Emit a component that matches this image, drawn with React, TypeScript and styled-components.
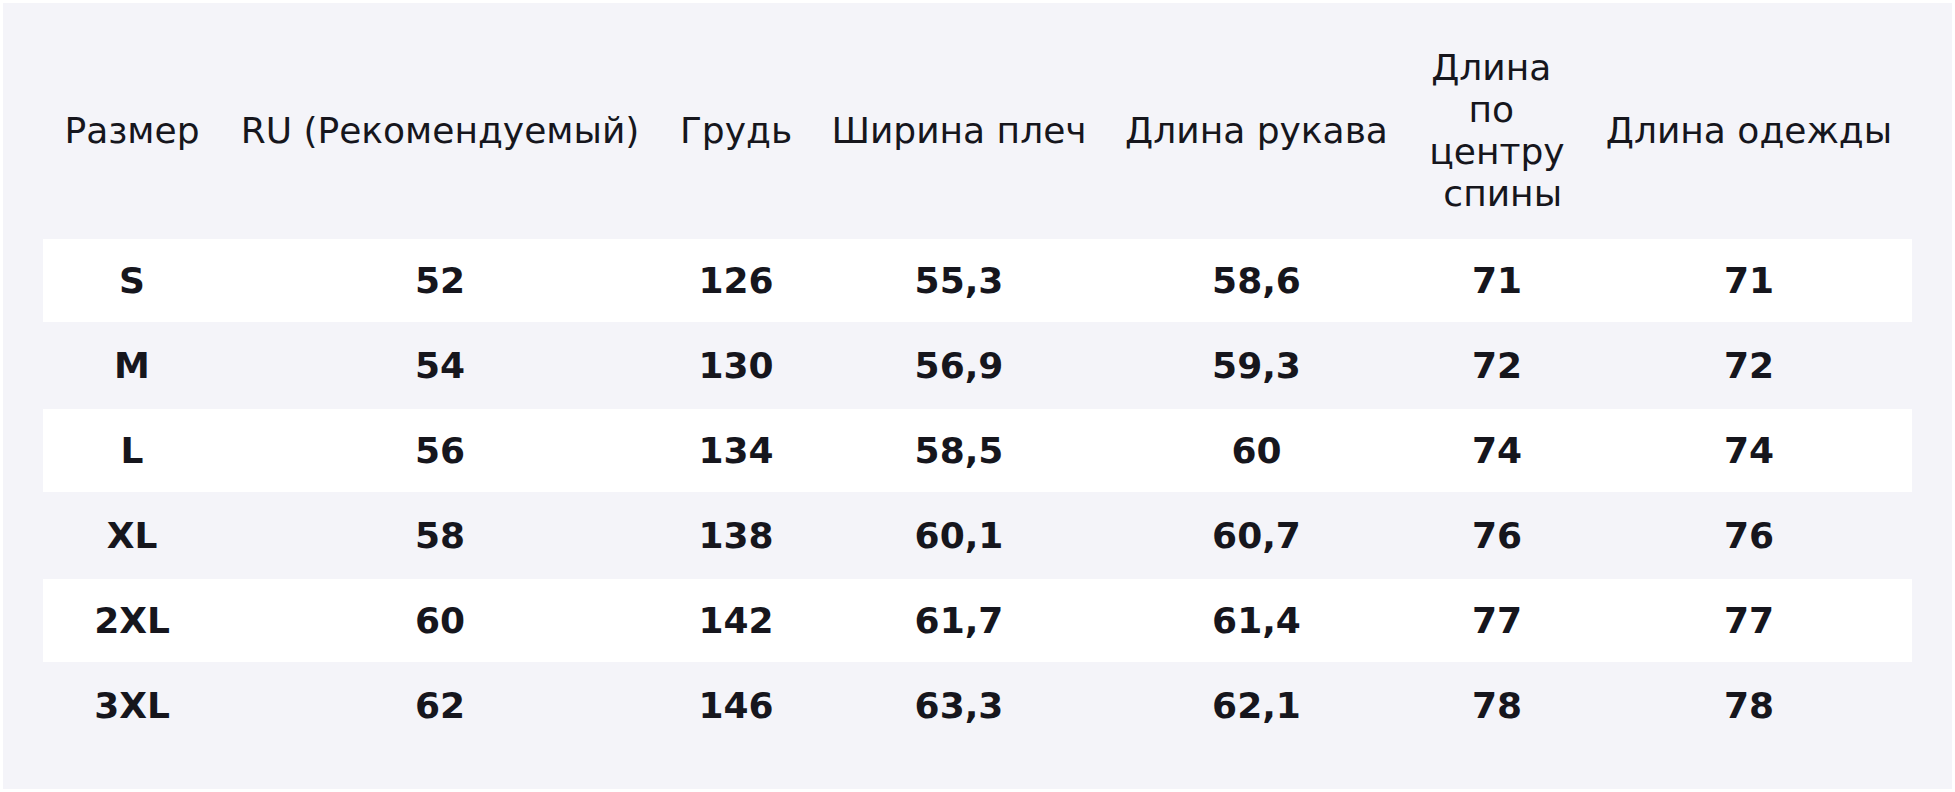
import React from 'react'
import styled, { createGlobalStyle } from 'styled-components'

const GlobalStyle = createGlobalStyle`
  body {
    margin: 0;
    background: #ffffff;
    font-family: 'DejaVu Sans', Verdana, sans-serif;
  }
`

const Page = styled.div`
  padding: 3px;
`

const Panel = styled.div`
  background: #f4f4f9;
  padding: 40px 40px 42px;
`

const Table = styled.table`
  width: 100%;
  table-layout: fixed;
  border-collapse: separate;
  border-spacing: 0 2px;
  margin: -2px 0;
  color: #16161d;
  font-size: 36px;
`

const HeadCell = styled.th`
  padding: 4px 16px 22px;
  line-height: 42px;
  font-weight: normal;
  text-align: center;
  vertical-align: middle;
`

const Row = styled.tr<{ $striped: boolean }>`
  background: ${p => (p.$striped ? '#ffffff' : 'transparent')};
`

const Cell = styled.td`
  padding: 20px 16px;
  line-height: 43px;
  font-weight: bold;
  text-align: center;
  vertical-align: middle;
`

const columns = [
  { title: 'Размер', width: 178 },
  { title: 'RU (Рекомендуемый)', width: 438 },
  { title: 'Грудь', width: 154 },
  { title: 'Ширина плеч', width: 292 },
  { title: 'Длина рукава', width: 303 },
  { title: 'Длина\u00a0 по\u00a0 центру \u00a0спины', width: 178 },
  { title: 'Длина одежды', width: 326 },
]

const rows = [
  ['S', '52', '126', '55,3', '58,6', '71', '71'],
  ['M', '54', '130', '56,9', '59,3', '72', '72'],
  ['L', '56', '134', '58,5', '60', '74', '74'],
  ['XL', '58', '138', '60,1', '60,7', '76', '76'],
  ['2XL', '60', '142', '61,7', '61,4', '77', '77'],
  ['3XL', '62', '146', '63,3', '62,1', '78', '78'],
]

export default function App(): React.ReactElement {
  return (
    <Page>
      <GlobalStyle />
      <Panel>
        <Table>
          <colgroup>
            {columns.map(c => (
              <col key={c.title} style={{ width: `${(c.width / 1869) * 100}%` }} />
            ))}
          </colgroup>
          <thead>
            <tr>
              {columns.map(c => (
                <HeadCell key={c.title}>{c.title}</HeadCell>
              ))}
            </tr>
          </thead>
          <tbody>
            {rows.map((r, i) => (
              <Row key={r[0]} $striped={i % 2 === 0}>
                {r.map((v, j) => (
                  <Cell key={j}>{v}</Cell>
                ))}
              </Row>
            ))}
          </tbody>
        </Table>
      </Panel>
    </Page>
  )
}
